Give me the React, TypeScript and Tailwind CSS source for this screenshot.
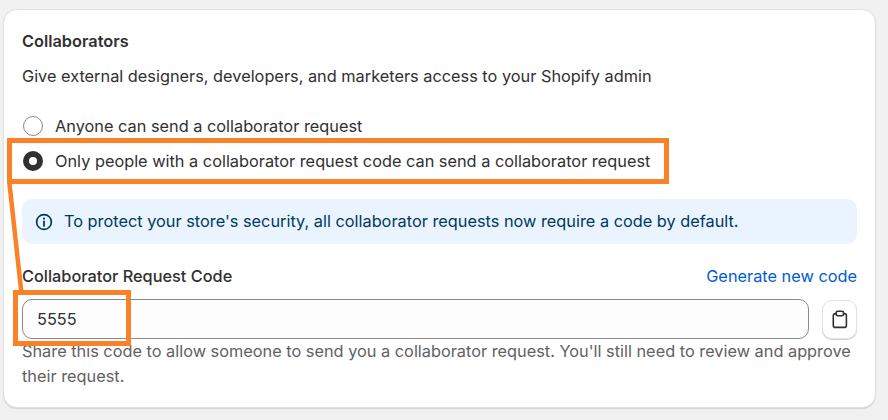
import React from "react";

const font = "font-['Inter',sans-serif]";

function Radio({ checked }: { checked?: boolean }) {
  if (checked) {
    return <span className="ml-px box-border h-5 w-5 shrink-0 rounded-full border-[6px] border-[#303030] bg-white" />;
  }
  return <span className="ml-px box-border h-5 w-5 shrink-0 rounded-full border border-[#8a8a8a] bg-white" />;
}

export default function App() {
  return (
    <div className={`${font} relative h-[420px] w-[888px] overflow-hidden bg-[#f1f1f1] pl-[3px] pr-[12px] pt-[9px] text-[#303030]`}>
      <div className="box-border h-[399px] w-[873px] rounded-[14px] border border-[#e1e1e1] bg-white pl-[18px] pr-[18px] pt-[21px] shadow-[0_1px_1px_rgba(0,0,0,0.12)]">
        <h2 className="text-[16.32px] font-semibold leading-5">Collaborators</h2>
        <p className="mt-[15px] text-[16.32px] leading-5">
          Give external designers, developers, and marketers access to your Shopify admin
        </p>

        <div className="mt-[30px] flex h-5 items-center gap-[12px] text-[16.32px]">
          <Radio />
          <span>Anyone can send a collaborator request</span>
        </div>
        <div className="mt-[15px] flex h-5 items-center gap-[12px] text-[16.32px]">
          <Radio checked />
          <span>Only people with a collaborator request code can send a collaborator request</span>
        </div>

        <div className="mt-[28px] flex h-[45px] items-center gap-[10px] rounded-[10px] bg-[#eaf4ff] pl-[12px] text-[16.32px] text-[#00395d]">
          <svg viewBox="0 0 20 20" className="h-5 w-5 shrink-0" fill="none">
            <circle cx="10" cy="10" r="7.4" stroke="#00395d" strokeWidth="1.7" />
            <circle cx="10" cy="6.6" r="1.05" fill="#00395d" />
            <path d="M10 9.3v4.6" stroke="#00395d" strokeWidth="1.8" strokeLinecap="round" />
          </svg>
          <span>To protect your store's security, all collaborator requests now require a code by default.</span>
        </div>

        <div className="mt-[22px] flex h-5 items-center justify-between text-[16.32px]">
          <span className="font-medium">Collaborator Request Code</span>
          <a className="text-[#005bd3]">Generate new code</a>
        </div>

        <div className="mt-[13px] flex items-center gap-[13px]">
          <div className="box-border flex h-10 flex-1 items-center rounded-[10px] border border-[#8a8a8a] bg-[#fdfdfd] pl-[14px] text-[16.32px]">
            5555
          </div>
          <button className="flex h-[39px] w-[35px] items-center justify-center rounded-[10px] border border-[#e3e3e3] bg-white shadow-[0_1px_1px_rgba(0,0,0,0.2)]">
            <svg viewBox="0 0 20 20" className="h-5 w-5" fill="none" stroke="#303030" strokeWidth="1.6">
              <path d="M6.2 4.6H5.3a2 2 0 0 0-2 2v9.8a2 2 0 0 0 2 2h9.1a2 2 0 0 0 2-2V6.6a2 2 0 0 0-2-2h-.9" />
              <rect x="6.2" y="2.3" width="7.3" height="4.4" rx="1.4" />
            </svg>
          </button>
        </div>

        <p className="w-[840px] text-[16.32px] leading-[25px] text-[#616161]">
          Share this code to allow someone to send you a collaborator request. You'll still need to review and approve their request.
        </p>
      </div>

      {/* Orange annotation marks */}
      <div className="absolute left-[7px] top-[138px] box-border h-[46px] w-[662px] border-[5px] border-[#f98128]" />
      <div className="absolute left-[13px] top-[290px] box-border h-[56px] w-[118px] border-[5px] border-[#f98128]" />
      <svg className="absolute left-0 top-0" width="888" height="420" fill="none">
        <path d="M9.3 182L21.2 291" stroke="#f98128" strokeWidth="4.5" />
      </svg>
    </div>
  );
}
